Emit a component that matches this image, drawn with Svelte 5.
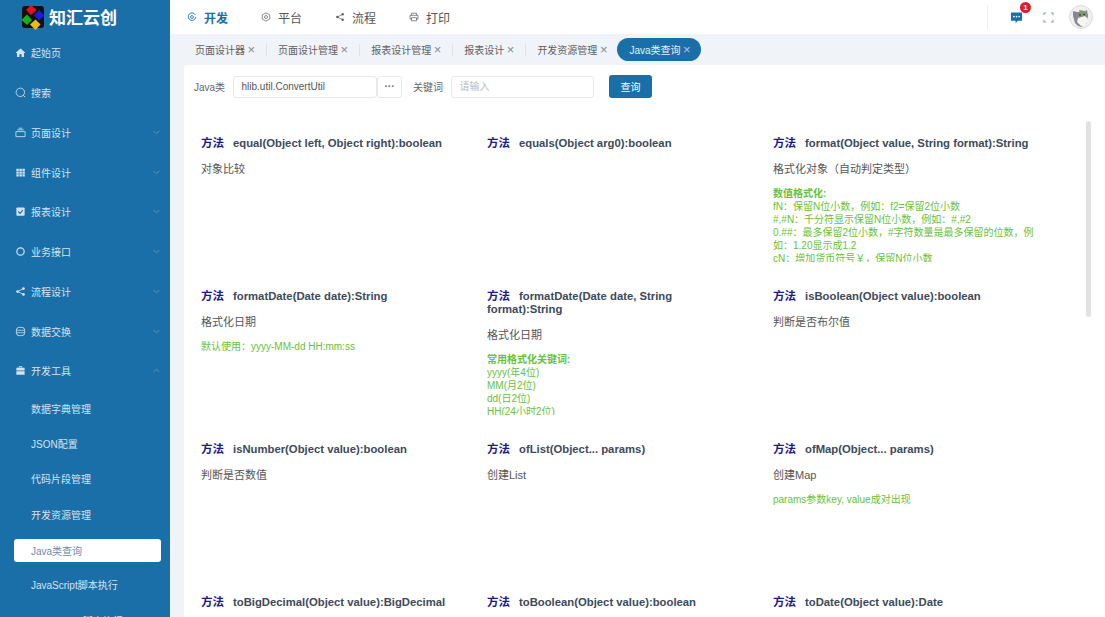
<script lang="ts">
type Method = { sig: string; desc?: string; noteTitle?: string; note?: string[] };

const menus = [
	{ label: '起始页', icon: 'home' },
	{ label: '搜索', icon: 'search' },
	{ label: '页面设计', icon: 'layers', arrow: 'down' },
	{ label: '组件设计', icon: 'grid', arrow: 'down' },
	{ label: '报表设计', icon: 'check', arrow: 'down' },
	{ label: '业务接口', icon: 'ring', arrow: 'down' },
	{ label: '流程设计', icon: 'share', arrow: 'down' },
	{ label: '数据交换', icon: 'db', arrow: 'down' },
	{ label: '开发工具', icon: 'case', arrow: 'up' }
];

const subMenus = ['数据字典管理', 'JSON配置', '代码片段管理', '开发资源管理', 'Java类查询', 'JavaScript脚本执行', 'Freemarker脚本执行'];

const tabs = ['页面设计器', '页面设计管理', '报表设计管理', '报表设计', '开发资源管理'];

const methods: Method[] = [
	{ sig: 'equal(Object left, Object right):boolean', desc: '对象比较' },
	{ sig: 'equals(Object arg0):boolean' },
	{
		sig: 'format(Object value, String format):String',
		desc: '格式化对象（自动判定类型）',
		noteTitle: '数值格式化:',
		note: ['fN：保留N位小数，例如：f2=保留2位小数', '#,#N：千分符显示保留N位小数，例如：#,#2', '0.##：最多保留2位小数，#字符数量是最多保留的位数，例如：1.20显示成1.2', 'cN：增加货币符号￥，保留N位小数']
	},
	{ sig: 'formatDate(Date date):String', desc: '格式化日期', note: ['默认使用：yyyy-MM-dd HH:mm:ss'] },
	{
		sig: 'formatDate(Date date, String format):String',
		desc: '格式化日期',
		noteTitle: '常用格式化关键词:',
		note: ['yyyy(年4位)', 'MM(月2位)', 'dd(日2位)', 'HH(24小时2位)', 'mm(分钟2位)']
	},
	{ sig: 'isBoolean(Object value):boolean', desc: '判断是否布尔值' },
	{ sig: 'isNumber(Object value):boolean', desc: '判断是否数值' },
	{ sig: 'ofList(Object... params)', desc: '创建List' },
	{ sig: 'ofMap(Object... params)', desc: '创建Map', note: ['params参数key, value成对出现'] },
	{ sig: 'toBigDecimal(Object value):BigDecimal' },
	{ sig: 'toBoolean(Object value):boolean' },
	{ sig: 'toDate(Object value):Date' }
];
</script>

{#snippet menuIcon(name: string)}
	<svg class="menu-icon" viewBox="0 0 12 12" aria-hidden="true">
		{#if name === 'home'}
			<path d="M6 1.500 1 6v.6h1.200V11h2.600V8h2.400v3h2.600V6.600H11V6z" fill="currentColor" />
		{:else if name === 'search'}
			<circle cx="5.800" cy="5.800" r="4.600" fill="none" stroke="currentColor" stroke-width=".9" />
			<path d="M9 9l2 2" stroke="currentColor" stroke-width="1" />
		{:else if name === 'layers'}
			<path d="M1 5h10v5.500H1zM2.500 3h7M4 1.300h4" fill="none" stroke="currentColor" stroke-width=".9" />
		{:else if name === 'grid'}
			<path d="M1.500 2h2.600v2.300H1.500zM4.800 2h2.600v2.300H4.800zM8.100 2h2.600v2.300H8.100zM1.500 5h2.600v2.300H1.500zM4.800 5h2.600v2.300H4.800zM8.100 5h2.600v2.300H8.100zM1.500 8h2.600v2.300H1.500zM4.800 8h2.600v2.300H4.800zM8.100 8h2.600v2.300H8.100z" fill="currentColor" />
		{:else if name === 'check'}
			<rect x="1.500" y="1.500" width="9" height="9" rx="1" fill="currentColor" />
			<path d="M3.500 6l2 2 3-3.600" fill="none" stroke="#1b6fa9" stroke-width="1.200" />
		{:else if name === 'ring'}
			<circle cx="6" cy="6" r="4" fill="none" stroke="currentColor" stroke-width="1.300" />
		{:else if name === 'share'}
			<circle cx="2.800" cy="6" r="1.500" fill="currentColor" />
			<circle cx="9.200" cy="2.800" r="1.500" fill="currentColor" />
			<circle cx="9.200" cy="9.200" r="1.500" fill="currentColor" />
			<path d="M2.800 6l6.400-3.200M2.800 6l6.400 3.200" stroke="currentColor" stroke-width=".9" />
		{:else if name === 'db'}
			<rect x="1.500" y="1.500" width="9" height="9" rx="3" fill="none" stroke="currentColor" stroke-width=".9" />
			<path d="M1.500 4.700h9M1.500 7.300h9" stroke="currentColor" stroke-width=".8" />
		{:else if name === 'case'}
			<path d="M4.500 3V1.800h3V3" fill="none" stroke="currentColor" />
			<path d="M1.500 3h9v3h-9zM1.500 6.800h9V10.500h-9z" fill="currentColor" />
		{/if}
	</svg>
{/snippet}

<div class="layout">
	<aside class="sidebar">
		<div class="logo">
			<svg class="logo-mark" viewBox="0 0 24 26" aria-hidden="true">
				<rect x="1" y="2" width="22" height="22" rx="3" fill="#111" />
				<path d="M10 1l5.500 5-5.500 5-5-5z" fill="#e8101c" />
				<path d="M18 6l5.500 5.500-5.500 5-5-5z" fill="#1a1ae0" />
				<path d="M6 10.500l5 5.500-5 5-5.500-5z" fill="#18b018" />
				<path d="M14.500 15.500l5 5-5 5.500-5.500-5.500z" fill="#f2b818" />
			</svg>
			<span>知汇云创</span>
		</div>
		<nav>
			{#each menus as item (item.label)}
				<div class="menu-item">
					{@render menuIcon(item.icon)}
					<span class="menu-label">{item.label}</span>
					{#if item.arrow}
						<svg class="arrow" class:up={item.arrow === 'up'} viewBox="0 0 8 5" aria-hidden="true">
							<path d="M.8.8 4 4 7.200.8" fill="none" stroke="currentColor" stroke-width=".8" />
						</svg>
					{/if}
				</div>
			{/each}
			{#each subMenus as sub (sub)}
				<div class="sub-item" class:active={sub === 'Java类查询'}><span>{sub}</span></div>
			{/each}
		</nav>
	</aside>

	<div class="right">
		<header class="topbar">
			<div class="top-nav">
				<div class="top-link current">
					<svg viewBox="0 0 12 12" aria-hidden="true"><path d="M10 3.500A4.500 4.500 0 1 0 10.500 6" fill="none" stroke="currentColor" stroke-width="1.100" /><circle cx="6" cy="6" r="1.700" fill="none" stroke="currentColor" /></svg>
					<span>开发</span>
				</div>
				<div class="top-link">
					<svg viewBox="0 0 12 12" aria-hidden="true"><path d="M6 1l4.500 2.500v5L6 11 1.500 8.500v-5z" fill="none" stroke="currentColor" stroke-width=".9" /><circle cx="6" cy="6" r="1.800" fill="none" stroke="currentColor" stroke-width=".9" /></svg>
					<span>平台</span>
				</div>
				<div class="top-link">
					<svg viewBox="0 0 12 12" aria-hidden="true"><circle cx="2.800" cy="6" r="1.500" fill="currentColor" /><circle cx="9.200" cy="2.800" r="1.500" fill="currentColor" /><circle cx="9.200" cy="9.200" r="1.500" fill="currentColor" /><path d="M2.800 6l6.400-3.200M2.800 6l6.400 3.200" stroke="currentColor" stroke-width=".9" /></svg>
					<span>流程</span>
				</div>
				<div class="top-link">
					<svg viewBox="0 0 12 12" aria-hidden="true"><path d="M3 4V1.500h6V4M3 8.500H1.200V4h9.600v4.500H9M3 6.800h6v3.700H3z" fill="none" stroke="currentColor" stroke-width=".9" /></svg>
					<span>打印</span>
				</div>
			</div>
			<div class="top-tools">
				<div class="chat">
					<svg viewBox="0 0 14 14" aria-hidden="true">
						<path d="M1 1.500h12v9H8.500L6 13.200V10.500H1z" fill="#1b6fa9" />
						<circle cx="4.200" cy="6" r=".9" fill="#fff" /><circle cx="7" cy="6" r=".9" fill="#fff" /><circle cx="9.800" cy="6" r=".9" fill="#fff" />
					</svg>
					<b class="badge">1</b>
				</div>
				<svg class="expand" viewBox="0 0 12 12" aria-hidden="true">
					<path d="M1 3.500V1h2.500M8.500 1H11v2.500M11 8.500V11H8.500M3.500 11H1V8.500" fill="none" stroke="#8fa3b3" stroke-width="1.100" />
				</svg>
				<svg class="avatar" viewBox="0 0 24 24" aria-hidden="true">
					<circle cx="12" cy="12" r="11.500" fill="#f0f1ef" stroke="#cfd3cf" stroke-width=".7" />
					<path d="M4 6l4 1h7l3-2 1 6-2 9-4 2-4-1-3-3-2-7z" fill="#8a8592" />
					<path d="M10 5l6 1 1 5-5 2z" fill="#7c9c6a" />
					<path d="M9 13l7-2 3 3-2 6-3 2-3-2-3-3z" fill="#f6f6f2" />
					<circle cx="11" cy="10" r=".8" fill="#222" /><circle cx="15" cy="9.500" r=".8" fill="#222" />
				</svg>
			</div>
		</header>

		<div class="tabs">
			{#each tabs as tab, i (tab)}
				{#if i > 0}<i class="tab-sep"></i>{/if}
				<div class="tab">{tab}<span class="close">×</span></div>
			{/each}
			<div class="tab current">Java类查询<span class="close">×</span></div>
		</div>

		<main class="panel">
			<div class="toolbar">
				<span class="field-label">Java类</span>
				<div class="input java-input">hlib.util.ConvertUtil</div>
				<div class="more">···</div>
				<span class="field-label keyword">关键词</span>
				<div class="input placeholder">请输入</div>
				<button class="search-btn">查询</button>
			</div>
			<div class="cards">
				{#each methods as m, i (i)}
					<section class="card">
						<h3><em>方法</em>{m.sig}</h3>
						{#if m.desc}<p class="desc">{m.desc}</p>{/if}
						{#if m.note}
							<div class="note">
								{#if m.noteTitle}<strong>{m.noteTitle}</strong>{/if}
								{#each m.note as line (line)}<div>{line}</div>{/each}
							</div>
						{/if}
					</section>
				{/each}
			</div>
			<div class="scroll-thumb"></div>
		</main>
	</div>
</div>

<style>
:global(body) {
	margin: 0;
	font-family: "Liberation Sans", "Noto Sans CJK SC", sans-serif;
}
.layout {
	display: flex;
	width: 1105px;
	height: 617px;
	overflow: hidden;
	background: #f0f3f8;
}
.sidebar {
	width: 170px;
	flex: none;
	background: #1b6fa9;
	color: #d5e3ee;
	font-size: 10px;
}
nav {
	display: flex;
	flex-direction: column;
}
.logo {
	height: 33px;
	display: flex;
	align-items: center;
	padding-left: 21px;
	gap: 4px;
	color: #fff;
	font-size: 17px;
	font-weight: 700;
}
.logo-mark {
	width: 24px;
	height: 26px;
	flex: none;
}
.menu-item {
	height: 39.75px;
	flex: none;
	display: flex;
	align-items: center;
	padding-left: 14.500px;
}
.menu-icon {
	width: 11px;
	height: 11px;
	margin-right: 5.500px;
	flex: none;
}
.menu-label {
	flex: 1;
}
.arrow {
	width: 7px;
	height: 5px;
	margin-right: 10px;
	color: #6fa3c9;
}
.arrow.up {
	transform: rotate(180deg);
}
.sub-item {
	height: 25px;
	flex: none;
	margin: 0 9px 10.3px 14px;
	padding-left: 17px;
	display: flex;
	align-items: center;
	border-radius: 3px;
	white-space: nowrap;
}
nav .sub-item:nth-child(10) {
	margin-top: 5px;
}
.sub-item.active {
	height: 23px;
	margin-top: 2px;
	margin-bottom: 10.500px;
	background: #fff;
	color: #6b8bad;
}
.right {
	flex: 1;
	min-width: 0;
	display: flex;
	flex-direction: column;
}
.topbar {
	height: 34px;
	flex: none;
	background: #fff;
	display: flex;
	justify-content: space-between;
	align-items: center;
}
.top-nav {
	display: flex;
	padding-left: 17px;
	gap: 33px;
}
.top-link {
	display: flex;
	align-items: center;
	gap: 7px;
	font-size: 12px;
	color: #555;
	width: 41px;
	white-space: nowrap;
}
.top-link svg {
	width: 10px;
	height: 10px;
	flex: none;
	color: #666;
}
.top-link.current {
	color: #1b6fa9;
	font-weight: 700;
}
.top-link.current svg {
	color: #1b6fa9;
}
.top-tools {
	display: flex;
	align-items: center;
	height: 24px;
	border-left: 1px solid #eee;
	padding: 0 12px 0 22px;
}
.chat {
	position: relative;
	width: 13px;
	height: 13px;
	margin-right: 20px;
}
.chat svg {
	display: block;
	width: 13px;
	height: 13px;
}
.badge {
	position: absolute;
	left: 10px;
	top: -9px;
	width: 11px;
	height: 11px;
	border-radius: 50%;
	background: #e01a2b;
	color: #fff;
	font-size: 8px;
	line-height: 11px;
	text-align: center;
}
.expand {
	width: 11px;
	height: 11px;
	margin-right: 15px;
}
.avatar {
	width: 24px;
	height: 24px;
}
.tabs {
	height: 31px;
	flex: none;
	display: flex;
	align-items: center;
	padding-left: 25px;
	font-size: 10px;
	color: #606060;
}
.tab {
	white-space: nowrap;
}
.close {
	margin-left: 2.500px;
	font-size: 13px;
	color: #8a8a8a;
}
.tab-sep {
	width: 1px;
	height: 12px;
	background: #dfe3e8;
	margin: 0 11px;
}
.tab.current {
	height: 23px;
	margin-left: 10px;
	padding: 0 10px 0 12px;
	border-radius: 12px;
	background: #1b6fa9;
	color: #e8f0f6;
	line-height: 23px;
}
.tab.current .close {
	color: #a9c8de;
}
.panel {
	position: relative;
	flex: 1;
	margin-left: 14px;
	min-height: 0;
	background: #fff;
	overflow: hidden;
	border-radius: 3px 0 0 0;
}
.toolbar {
	display: flex;
	align-items: center;
	height: 23px;
	margin-top: 10px;
	padding-left: 10px;
	font-size: 10px;
	color: #666;
}
.field-label {
	width: 39px;
	white-space: nowrap;
}
.field-label.keyword {
	width: 38px;
	margin-left: 11px;
}
.input {
	box-sizing: border-box;
	width: 144px;
	height: 22px;
	padding-left: 7.500px;
	border: 1px solid #e6e8ec;
	border-radius: 3px;
	line-height: 20px;
	color: #555;
}
.placeholder {
	width: 143px;
	color: #b8bcc2;
}
.more {
	box-sizing: border-box;
	width: 25px;
	height: 22px;
	border: 1px solid #e6e8ec;
	border-radius: 3px;
	text-align: center;
	line-height: 19px;
	font-weight: 700;
}
.search-btn {
	width: 43px;
	height: 23px;
	margin-left: 15px;
	padding: 0;
	border: none;
	border-radius: 3px;
	background: #1b6fa9;
	color: #fff;
	font: inherit;
}
.cards {
	display: grid;
	grid-template-columns: repeat(3, 286px);
	grid-auto-rows: 125px;
	row-gap: 28px;
	padding: 39px 0 0 17px;
}
.card {
	overflow: hidden;
	padding-right: 26px;
	box-sizing: border-box;
}
h3 {
	margin: 0;
	font-size: 11.3px;
	line-height: 13px;
	color: #3d4a5a;
	font-weight: 700;
}
h3 em {
	font-style: normal;
	font-size: 11.5px;
	color: #1a1a8c;
	margin-right: 9px;
}
.desc {
	margin: 13px 0 0;
	font-size: 11px;
	line-height: 13px;
	color: #555;
}
.note {
	margin-top: 11px;
	margin-right: -4px;
	font-size: 10px;
	line-height: 13px;
	color: #67c23a;
}
.note strong {
	display: block;
}
.scroll-thumb {
	position: absolute;
	left: 902px;
	top: 56px;
	width: 5px;
	height: 196px;
	border-radius: 3px;
	background: #e2e2e2;
}
</style>
